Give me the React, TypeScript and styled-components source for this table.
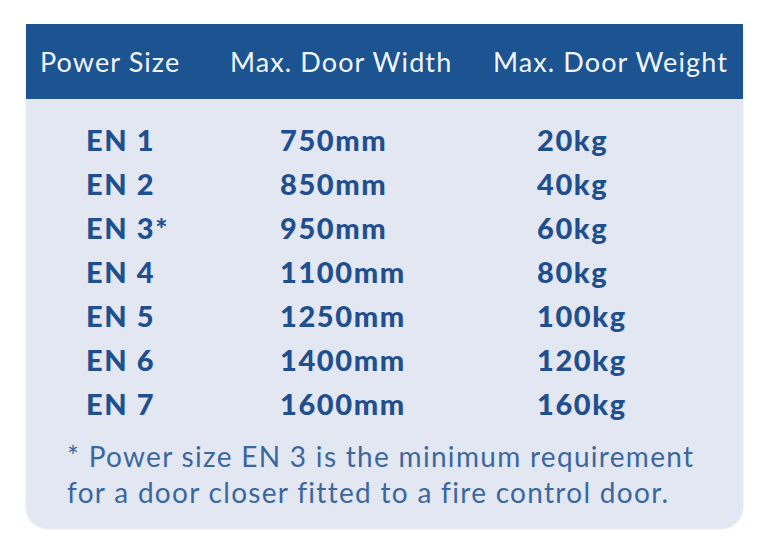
import styled, { createGlobalStyle } from "styled-components";

const GlobalStyle = createGlobalStyle`
  html, body {
    margin: 0;
    padding: 0;
    background: #ffffff;
  }
  body {
    font-family: "Lato", "Open Sans", sans-serif;
  }
`;

const Page = styled.div`
  width: 768px;
  height: 557px;
  padding: 24px 25px 0 26px;
  box-sizing: border-box;
`;

const Card = styled.div`
  width: 717px;
  height: 504px;
  background: #e3e7f2;
  border-radius: 0 0 22px 22px;
  overflow: hidden;
  box-shadow: 0 1px 2px rgba(120, 130, 160, 0.25);
`;

const Header = styled.div`
  height: 75px;
  background: #1c5492;
  display: grid;
  grid-template-columns: 190px 263px 1fr;
  align-items: center;
  padding-left: 14px;
  box-sizing: border-box;
`;

const HeadCell = styled.div`
  color: #f2f5fa;
  font-size: 27px;
  font-weight: 400;
  letter-spacing: 1.1px;
  white-space: nowrap;
`;

const Body = styled.div`
  padding: 18px 0 0 60px;
`;

const Row = styled.div`
  display: grid;
  grid-template-columns: 194px 257px 1fr;
  height: 44px;
  align-items: center;
`;

const Cell = styled.div`
  color: #1f4f8e;
  font-size: 29px;
  font-weight: 900;
  letter-spacing: 1.6px;
  white-space: nowrap;
`;

const Note = styled.p`
  margin: 13px 0 0 41px;
  color: #3b679e;
  font-size: 28px;
  line-height: 36px;
  font-weight: 400;
  letter-spacing: 1.3px;
  white-space: nowrap;
`;

const rows = [
  ["EN 1", "750mm", "20kg"],
  ["EN 2", "850mm", "40kg"],
  ["EN 3*", "950mm", "60kg"],
  ["EN 4", "1100mm", "80kg"],
  ["EN 5", "1250mm", "100kg"],
  ["EN 6", "1400mm", "120kg"],
  ["EN 7", "1600mm", "160kg"],
];

export default function App() {
  return (
    <>
      <GlobalStyle />
      <Page>
        <Card>
          <Header>
            <HeadCell>Power Size</HeadCell>
            <HeadCell>Max. Door Width</HeadCell>
            <HeadCell>Max. Door Weight</HeadCell>
          </Header>
          <Body>
            {rows.map((r) => (
              <Row key={r[0]}>
                <Cell>{r[0]}</Cell>
                <Cell>{r[1]}</Cell>
                <Cell>{r[2]}</Cell>
              </Row>
            ))}
          </Body>
          <Note>
            * Power size EN 3 is the minimum requirement
            <br />
            for a door closer fitted to a fire control door.
          </Note>
        </Card>
      </Page>
    </>
  );
}
